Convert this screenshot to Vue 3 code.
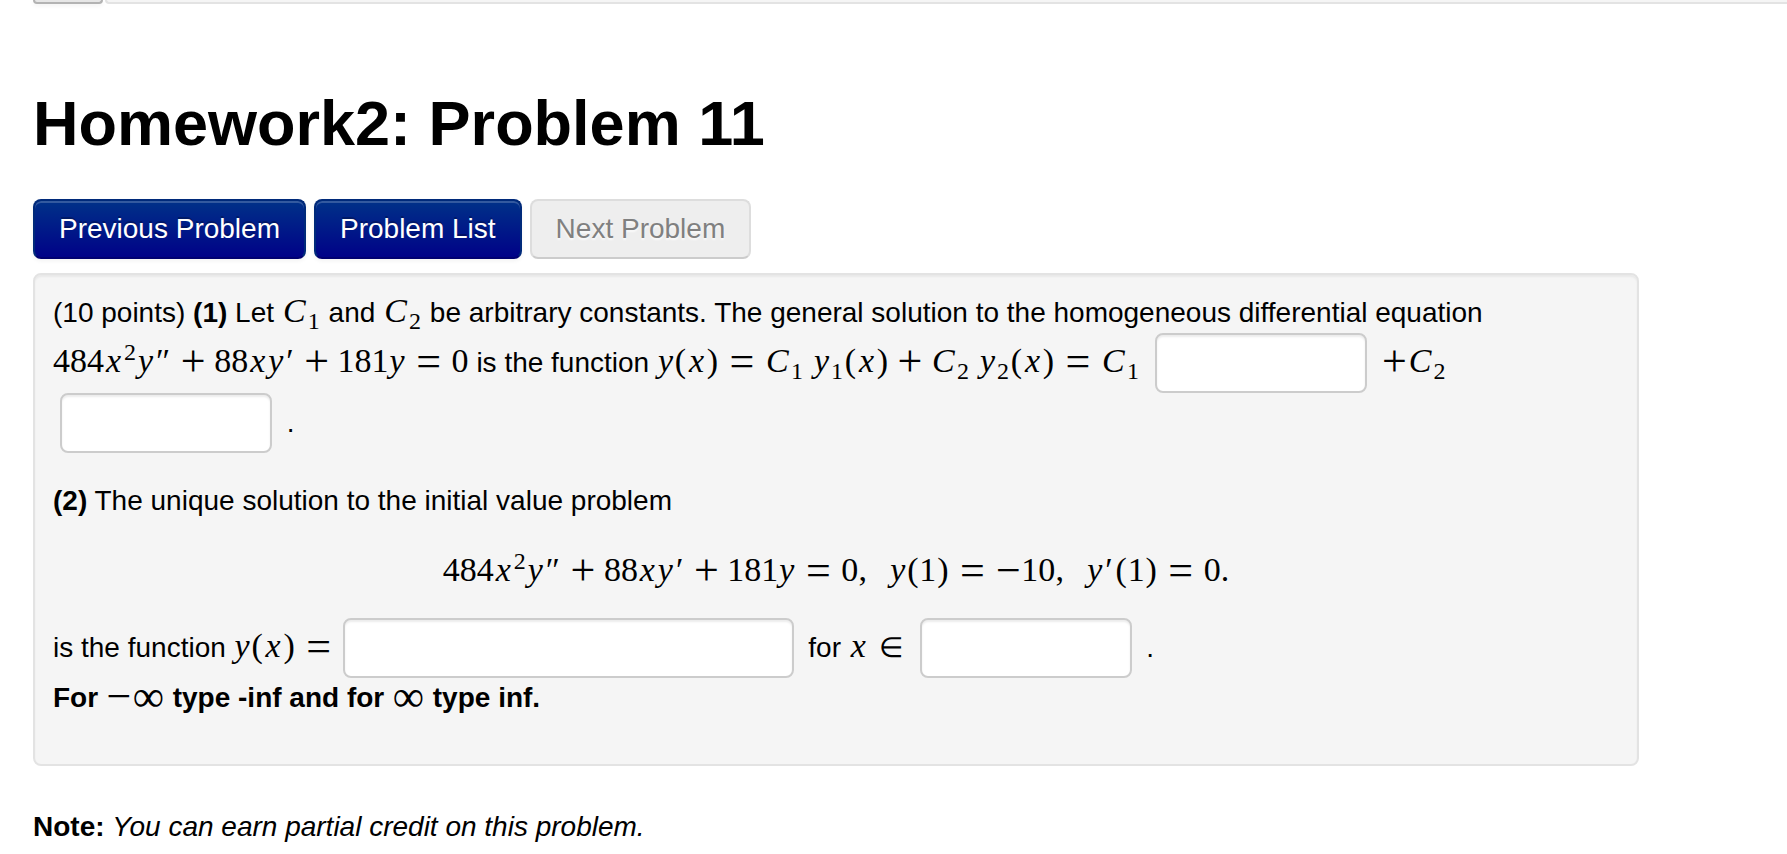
<template>
  <div class="page">
    <div class="topbar">
      <button class="toggle" type="button" aria-label="Menu"></button>
      <div class="breadcrumb"></div>
    </div>

    <main>
      <h1>Homework2: Problem 11</h1>

      <nav class="problem-nav">
        <button class="btn btn-primary" type="button">Previous Problem</button>
        <button class="btn btn-primary" type="button">Problem List</button>
        <button class="btn" type="button" disabled>Next Problem</button>
      </nav>

      <div class="well">
        <p>
          (10 points) <b>(1)</b> Let
          <span class="math"><span v-for="(t, i) in c1" :key="i" :class="t[0]">{{ t[1] }}</span></span>
          and
          <span class="math"><span v-for="(t, i) in c2" :key="i" :class="t[0]">{{ t[1] }}</span></span>
          be arbitrary constants. The general solution to the homogeneous differential equation
          <span class="math"><span v-for="(t, i) in equation" :key="i" :class="t[0]">{{ t[1] }}</span></span>
          is the function
          <span class="math"><span v-for="(t, i) in general" :key="i" :class="t[0]">{{ t[1] }}</span></span>
          {{ " " }}
          <input v-model="y1" type="text" aria-label="y1(x)" />
          {{ " " }}
          <span class="math"><span class="sign">+</span><span v-for="(t, i) in c2" :key="i" :class="t[0]">{{ t[1] }}</span></span>
          {{ " " }}
          <input v-model="y2" type="text" aria-label="y2(x)" />
          .
        </p>
        <p><b>(2)</b> The unique solution to the initial value problem</p>
        <div class="display">
          <span class="math"><span v-for="(t, i) in initial" :key="i" :class="t[0]">{{ t[1] }}</span></span>
        </div>
        <p>
          is the function
          <span class="math"><span v-for="(t, i) in yOfX" :key="i" :class="t[0]">{{ t[1] }}</span><span class="rel end">=</span></span><input v-model="solution" class="wide" type="text" aria-label="y(x)" />
          for
          <span class="math"><span class="x">x</span><span class="in">∈</span></span>
          {{ " " }}
          <input v-model="interval" type="text" aria-label="Interval" />
          .<br />
          <b>For <span class="math"><span class="sign">−</span><span class="inf">∞</span></span> type -inf and for
            <span class="math"><span class="inf">∞</span></span> type inf.</b>
        </p>
      </div>

      <p class="note"><b>Note:</b> <i>You can earn partial credit on this problem.</i></p>
    </main>
  </div>
</template>

<script setup>
import { ref } from "vue";

const y1 = ref("");
const y2 = ref("");
const solution = ref("");
const interval = ref("");

// each formula is a list of [class, text]
const c1 = [["c", "C"], ["sub", "1"]];
const c2 = [["c", "C"], ["sub", "2"]];
const yOfX = [["y", "y"], ["par", "("], ["x", "x"], ["par", ")"]];

const equation = [
  ["num", "484"],
  ["x", "x"],
  ["sup", "2"],
  ["y", "y"],
  ["prime", "″"],
  ["bin", "+"],
  ["num", "88"],
  ["x", "x"],
  ["y", "y"],
  ["prime", "′"],
  ["bin", "+"],
  ["num", "181"],
  ["y", "y"],
  ["rel", "="],
  ["num", "0"],
];

const general = [
  ...yOfX,
  ["rel", "="],
  ...c1,
  ["y spaced", "y"],
  ["sub", "1"],
  ["par", "("],
  ["x", "x"],
  ["par", ")"],
  ["bin", "+"],
  ...c2,
  ["y spaced", "y"],
  ["sub", "2"],
  ["par", "("],
  ["x", "x"],
  ["par", ")"],
  ["rel", "="],
  ...c1,
];

const initial = [
  ...equation,
  ["comma", ","],
  ["y", "y"],
  ["par", "("],
  ["num", "1"],
  ["par", ")"],
  ["rel", "="],
  ["sign", "−"],
  ["num", "10"],
  ["comma", ","],
  ["y", "y"],
  ["prime", "′"],
  ["par", "("],
  ["num", "1"],
  ["par", ")"],
  ["rel", "="],
  ["num", "0."],
];
</script>

<style>
body {
  background: #fff;
}
</style>

<style scoped>
.page {
  font-family: "Liberation Sans", Helvetica, Arial, sans-serif;
  font-size: 28px;
  line-height: 40px;
  color: #000;
  padding-left: 33px;
}

.topbar {
  display: flex;
  gap: 2px;
  height: 4px;
}
.toggle {
  width: 70px;
  padding: 0;
  background: #e6e6e6;
  border: 2px solid #b3b3b3;
  border-top: 0;
  border-radius: 0 0 8px 8px;
  box-shadow: 0 2px 4px rgba(0, 0, 0, 0.05);
}
.breadcrumb {
  flex: 1;
  background: #f5f5f5;
  border: 2px solid #e3e3e3;
  border-top: 0;
  border-right: 0;
  border-bottom-left-radius: 8px;
}

main {
  padding: 79px 148px 0 0;
}
h1 {
  margin: 0 0 36px;
  font-size: 63px;
  line-height: 80px;
}

.problem-nav {
  display: flex;
  gap: 8px;
  margin-bottom: 14px;
}
.btn {
  height: 60px;
  padding: 0 24px;
  font: inherit;
  border: 2px solid #ddd;
  border-bottom-color: #ccc;
  border-radius: 8px;
  background: #eee;
  color: #808080;
  text-shadow: 0 2px 2px rgba(255, 255, 255, 0.75);
}
.btn-primary {
  color: #fff;
  border-color: #002a7a #002a7a #000070;
  background: linear-gradient(#003388, #000088) border-box;
  text-shadow: 0 -2px 0 rgba(0, 0, 0, 0.25);
  box-shadow: inset 0 2px 0 rgba(255, 255, 255, 0.2), 0 2px 4px rgba(0, 0, 0, 0.05);
}

.well {
  padding: 18px 18px 46px;
  background: #f5f5f5;
  border: 2px solid #e3e3e3;
  border-radius: 8px;
  box-shadow: inset 0 2px 2px rgba(0, 0, 0, 0.05);
}
.well p {
  margin: 0;
}
.well p + p {
  margin-top: 28px;
}
.display {
  margin: 31px 0 26px;
  text-align: center;
}

input {
  box-sizing: border-box;
  width: 212px;
  height: 60px;
  margin: 0 7px;
  padding: 8px 12px;
  font: inherit;
  background: #fff;
  border: 2px solid #ccc;
  border-radius: 8px;
  box-shadow: inset 0 2px 2px rgba(0, 0, 0, 0.075);
}
.wide {
  width: 451px;
}

/* formulas */
.math {
  font-family: "Liberation Serif", "Times New Roman", serif;
  font-size: 34px;
  font-weight: normal;
  line-height: 0;
  white-space: nowrap;
}
.math span {
  display: inline-block;
  text-align: center;
}
.math .x,
.math .y,
.math .c {
  font-style: italic;
}
.math .x {
  width: 19px;
}
.math .y {
  width: 17px;
}
.math .c {
  width: 25px;
}
.math .spaced {
  margin-left: 9px;
}
.math .par {
  width: 13px;
}
.math .sub,
.math .sup {
  width: 14px;
  font-size: 24px;
}
.math .sub {
  vertical-align: -7px;
}
.math .sup {
  vertical-align: 12px;
}
.math .prime {
  padding: 0 2px;
}
.math .rel,
.math .bin,
.math .sign,
.math .inf {
  width: 26px;
  font-size: 44px;
  vertical-align: -4px;
}
.math .rel {
  margin: 0 10px;
}
.math .bin {
  margin: 0 8px;
}
.math .rel.end {
  margin-right: 4px;
}
.math .comma {
  width: 9px;
  margin-right: 22px;
}
.math .in {
  width: 28px;
  margin-left: 9px;
  font-size: 28px;
}
.math .inf {
  width: 33px;
}

.note {
  margin: 41px 0 0;
}
</style>
